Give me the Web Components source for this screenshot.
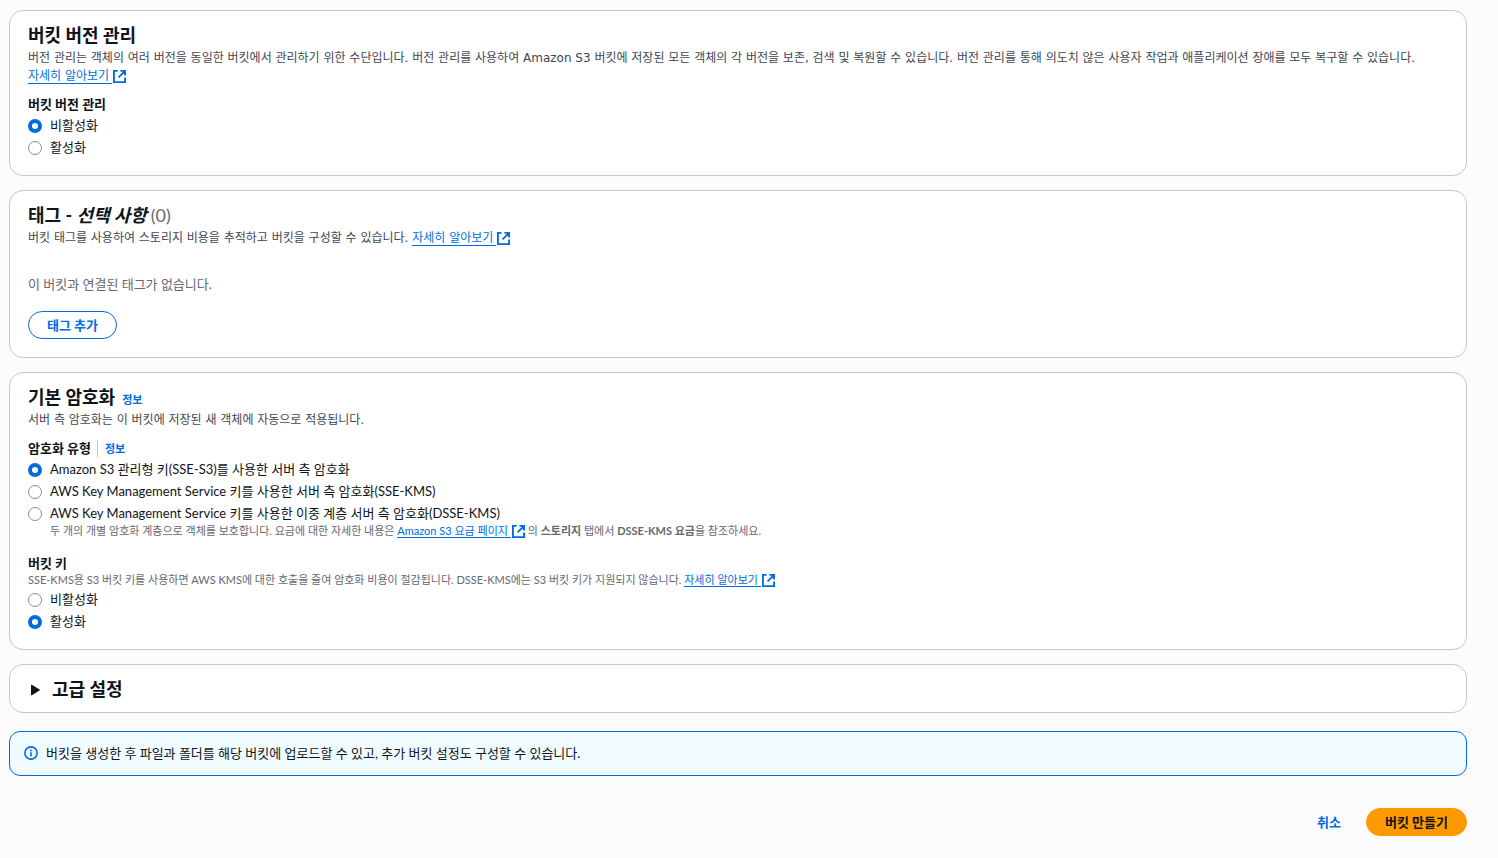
<!DOCTYPE html>
<html lang="ko">
<head>
<meta charset="utf-8">
<meta name="viewport" content="width=device-width, initial-scale=1">
<title>버킷 만들기</title>
<style>
    body {
        margin: 0;
        background: #fcfcfd;
        color: #0f141a;
        font: 13px/18px Lato, "Noto Sans CJK KR", sans-serif;
    }
</style>
</head>
<body>
<create-bucket-page></create-bucket-page>

<script>
class CreateBucketPage extends HTMLElement {
    constructor() {
        super();
        this.attachShadow({ mode: 'open' });
        this.shadowRoot.innerHTML = `
            <style>
                :host {
                    display: block;
                    padding: 10px 31px 22px 9px;
                }
                main {
                    display: flex;
                    flex-direction: column;
                    gap: 14px;
                }
                .empty {
                    margin: 18px 0 2px;
                    color: #656871;
                }
                .actions {
                    display: flex;
                    justify-content: flex-end;
                    gap: 6px;
                    margin-top: 18px;
                }
                info-alert {
                    margin-top: 4px;
                }
            </style>
            <main>
                <settings-panel>
                    <span slot="title">버킷 버전 관리</span>
                    <span slot="description">버전 관리는 객체의 여러 버전을 동일한 버킷에서 관리하기 위한 수단입니다. 버전 관리를 사용하여 Amazon S3 버킷에 저장된 모든 객체의 각 버전을 보존, 검색 및 복원할 수 있습니다. 버전 관리를 통해 의도치 않은 사용자 작업과 애플리케이션 장애를 모두 복구할 수 있습니다. <external-link>자세히 알아보기</external-link></span>
                    <radio-field label="버킷 버전 관리">
                        <radio-option checked>비활성화</radio-option>
                        <radio-option>활성화</radio-option>
                    </radio-field>
                </settings-panel>

                <settings-panel count="(0)">
                    <span slot="title">태그 - <i>선택 사항</i></span>
                    <span slot="description">버킷 태그를 사용하여 스토리지 비용을 추적하고 버킷을 구성할 수 있습니다. <external-link>자세히 알아보기</external-link></span>
                    <div class="empty">이 버킷과 연결된 태그가 없습니다.</div>
                    <action-button>태그 추가</action-button>
                </settings-panel>

                <settings-panel info="정보">
                    <span slot="title">기본 암호화</span>
                    <span slot="description">서버 측 암호화는 이 버킷에 저장된 새 객체에 자동으로 적용됩니다.</span>
                    <radio-field label="암호화 유형" info="정보">
                        <radio-option checked>Amazon S3 관리형 키(SSE-S3)를 사용한 서버 측 암호화</radio-option>
                        <radio-option>AWS Key Management Service 키를 사용한 서버 측 암호화(SSE-KMS)</radio-option>
                        <radio-option>AWS Key Management Service 키를 사용한 이중 계층 서버 측 암호화(DSSE-KMS)<span slot="hint">두 개의 개별 암호화 계층으로 객체를 보호합니다. 요금에 대한 자세한 내용은 <external-link>Amazon S3 요금 페이지</external-link>의 <b>스토리지</b> 탭에서 <b>DSSE-KMS 요금</b>을 참조하세요.</span></radio-option>
                    </radio-field>
                    <radio-field label="버킷 키">
                        <span slot="hint">SSE-KMS용 S3 버킷 키를 사용하면 AWS KMS에 대한 호출을 줄여 암호화 비용이 절감됩니다. DSSE-KMS에는 S3 버킷 키가 지원되지 않습니다. <external-link>자세히 알아보기</external-link></span>
                        <radio-option>비활성화</radio-option>
                        <radio-option checked>활성화</radio-option>
                    </radio-field>
                </settings-panel>

                <expandable-panel>고급 설정</expandable-panel>
                <info-alert>버킷을 생성한 후 파일과 폴더를 해당 버킷에 업로드할 수 있고, 추가 버킷 설정도 구성할 수 있습니다.</info-alert>

                <div class="actions">
                    <action-button variant="link">취소</action-button>
                    <action-button variant="primary">버킷 만들기</action-button>
                </div>
            </main>
        `;
    }
}

class SettingsPanel extends HTMLElement {
    connectedCallback() {
        const count = this.getAttribute('count');
        const info = this.getAttribute('info');
        this.attachShadow({ mode: 'open' });
        this.shadowRoot.innerHTML = `
            <style>
                :host {
                    display: block;
                    background: #fff;
                    border: 1px solid #c6c6cd;
                    border-radius: 14px;
                    padding: 13px 18px 18px;
                }
                header {
                    display: flex;
                    align-items: baseline;
                }
                h2 {
                    margin: 0;
                    font-size: 18px;
                    line-height: 22px;
                }
                .count {
                    margin-left: 4px;
                    color: #656871;
                    font-size: 18px;
                    line-height: 22px;
                }
                info-link {
                    margin-left: 7px;
                }
                p {
                    margin: 3px 0 0;
                    color: #424650;
                    font-family: "DejaVu Sans", "Noto Sans CJK KR", sans-serif;
                    font-size: 12px;
                }
                .body {
                    display: flex;
                    flex-direction: column;
                    align-items: flex-start;
                    gap: 16px;
                    padding-top: 10px;
                }
            </style>
            <header>
                <h2><slot name="title"></slot></h2>
                ${count ? `<span class="count">${count}</span>` : ''}
                ${info ? `<info-link>${info}</info-link>` : ''}
            </header>
            <p><slot name="description"></slot></p>
            <div class="body"><slot></slot></div>
        `;
    }
}

class RadioField extends HTMLElement {
    connectedCallback() {
        const label = this.getAttribute('label');
        const info = this.getAttribute('info');
        this.attachShadow({ mode: 'open' });
        this.shadowRoot.innerHTML = `
            <style>
                :host {
                    display: block;
                }
                fieldset {
                    border: 0;
                    margin: 0;
                    padding: 0;
                    min-width: 0;
                }
                legend {
                    display: flex;
                    align-items: center;
                    padding: 0;
                    font-weight: 700;
                }
                info-link {
                    margin-left: 6px;
                    padding: 2px 0 2px 7px;
                    border-left: 1px solid #c6c6cd;
                }
                .hint {
                    color: #656871;
                    font-size: 11px;
                    line-height: 15px;
                }
                .options {
                    display: flex;
                    flex-direction: column;
                    gap: 4px;
                    margin-top: 4px;
                }
            </style>
            <fieldset>
                <legend>${label}${info ? `<info-link>${info}</info-link>` : ''}</legend>
                <div class="hint"><slot name="hint"></slot></div>
                <div class="options"><slot></slot></div>
            </fieldset>
        `;
        this.addEventListener('radio-select', event => {
            this.querySelectorAll('radio-option').forEach(option => {
                option.input.checked = option === event.target;
            });
        });
    }
}

class RadioOption extends HTMLElement {
    connectedCallback() {
        this.attachShadow({ mode: 'open' });
        this.shadowRoot.innerHTML = `
            <style>
                :host {
                    display: block;
                }
                label {
                    display: flex;
                    align-items: flex-start;
                    gap: 8px;
                    min-height: 18px;
                    line-height: 16px;
                }
                input {
                    appearance: none;
                    box-sizing: border-box;
                    flex: none;
                    width: 14px;
                    height: 14px;
                    margin: 2px 0 0;
                    border: 1px solid #8c8c94;
                    border-radius: 50%;
                    background: #fff;
                }
                input:checked {
                    border: 4px solid #006ce0;
                }
                .hint {
                    margin-left: 22px;
                    color: #656871;
                    font-size: 11px;
                    line-height: 15px;
                }
            </style>
            <label><input type="radio"><span><slot></slot></span></label>
            <div class="hint"><slot name="hint"></slot></div>
        `;
        this.input = this.shadowRoot.querySelector('input');
        this.input.checked = this.hasAttribute('checked');
        this.input.addEventListener('change', () => {
            this.dispatchEvent(new CustomEvent('radio-select', { bubbles: true }));
        });
    }
}

class ExternalLink extends HTMLElement {
    constructor() {
        super();
        this.attachShadow({ mode: 'open' });
        this.shadowRoot.innerHTML = `
            <style>
                :host {
                    display: inline;
                }
                a {
                    color: #006ce0;
                    text-decoration: none;
                    white-space: nowrap;
                }
                .text {
                    padding-right: 3px;
                    border-bottom: 1px solid #006ce0;
                }
                svg {
                    width: 13px;
                    height: 13px;
                    margin-left: 1px;
                    vertical-align: -3px;
                }
            </style>
            <a href="#"><span class="text"><slot></slot></span><svg viewBox="1 1 14 14" fill="none" stroke="currentColor" stroke-width="2" aria-hidden="true"><path d="M9 2h5v5M7 9l7-7M14 9v5H2V2h4"/></svg></a>
        `;
    }
}

class InfoLink extends HTMLElement {
    constructor() {
        super();
        this.attachShadow({ mode: 'open' });
        this.shadowRoot.innerHTML = `
            <style>
                :host {
                    display: inline-block;
                    font-size: 11px;
                    font-weight: 700;
                    line-height: 13px;
                }
                a {
                    color: #006ce0;
                    text-decoration: none;
                }
            </style>
            <a href="#"><slot></slot></a>
        `;
    }
}

class ActionButton extends HTMLElement {
    constructor() {
        super();
        this.attachShadow({ mode: 'open' });
        this.shadowRoot.innerHTML = `
            <style>
                :host {
                    display: inline-block;
                }
                button {
                    display: block;
                    padding: 4px 18px;
                    border: 1px solid #006ce0;
                    border-radius: 18px;
                    background: #fff;
                    color: #006ce0;
                    font: inherit;
                    font-weight: 700;
                    cursor: pointer;
                }
                :host([variant="link"]) button {
                    border-color: transparent;
                    background: transparent;
                }
                :host([variant="primary"]) button {
                    border-color: #ff9900;
                    background: #ff9900;
                    color: #0f141a;
                }
            </style>
            <button type="button"><slot></slot></button>
        `;
    }
}

class ExpandablePanel extends HTMLElement {
    constructor() {
        super();
        this.attachShadow({ mode: 'open' });
        this.shadowRoot.innerHTML = `
            <style>
                :host {
                    display: block;
                    background: #fff;
                    border: 1px solid #c6c6cd;
                    border-radius: 14px;
                }
                h2 {
                    margin: 0;
                }
                button {
                    display: flex;
                    align-items: center;
                    gap: 10px;
                    width: 100%;
                    padding: 13px 18px 12px;
                    border: 0;
                    background: none;
                    color: inherit;
                    font: inherit;
                    font-size: 18px;
                    font-weight: 700;
                    line-height: 22px;
                }
                svg {
                    width: 14px;
                    height: 14px;
                }
                button[aria-expanded="true"] svg {
                    transform: rotate(90deg);
                }
            </style>
            <h2><button type="button" aria-expanded="false"><svg viewBox="0 0 14 14" fill="currentColor" stroke="currentColor" stroke-linejoin="round" aria-hidden="true"><path d="M3.5 3l8 5-8 5z"/></svg><slot></slot></button></h2>
        `;
        const button = this.shadowRoot.querySelector('button');
        button.addEventListener('click', () => {
            button.setAttribute('aria-expanded', button.getAttribute('aria-expanded') === 'false');
        });
    }
}

class InfoAlert extends HTMLElement {
    constructor() {
        super();
        this.attachShadow({ mode: 'open' });
        this.shadowRoot.innerHTML = `
            <style>
                :host {
                    display: flex;
                    align-items: center;
                    gap: 8px;
                    padding: 12px 14px 13px;
                    border: 1px solid #006ce0;
                    border-radius: 11px;
                    background: #f0fbff;
                }
                svg {
                    flex: none;
                    width: 14px;
                    height: 14px;
                    color: #006ce0;
                }
            </style>
            <svg viewBox="0 0 16 16" fill="none" stroke="currentColor" stroke-width="1.8" aria-hidden="true"><circle cx="8" cy="8" r="7"/><path d="M8 12V7M8 4v2"/></svg>
            <div><slot></slot></div>
        `;
    }
}

customElements.define('create-bucket-page', CreateBucketPage);
customElements.define('settings-panel', SettingsPanel);
customElements.define('radio-field', RadioField);
customElements.define('radio-option', RadioOption);
customElements.define('external-link', ExternalLink);
customElements.define('info-link', InfoLink);
customElements.define('action-button', ActionButton);
customElements.define('expandable-panel', ExpandablePanel);
customElements.define('info-alert', InfoAlert);
</script>
</body>
</html>
